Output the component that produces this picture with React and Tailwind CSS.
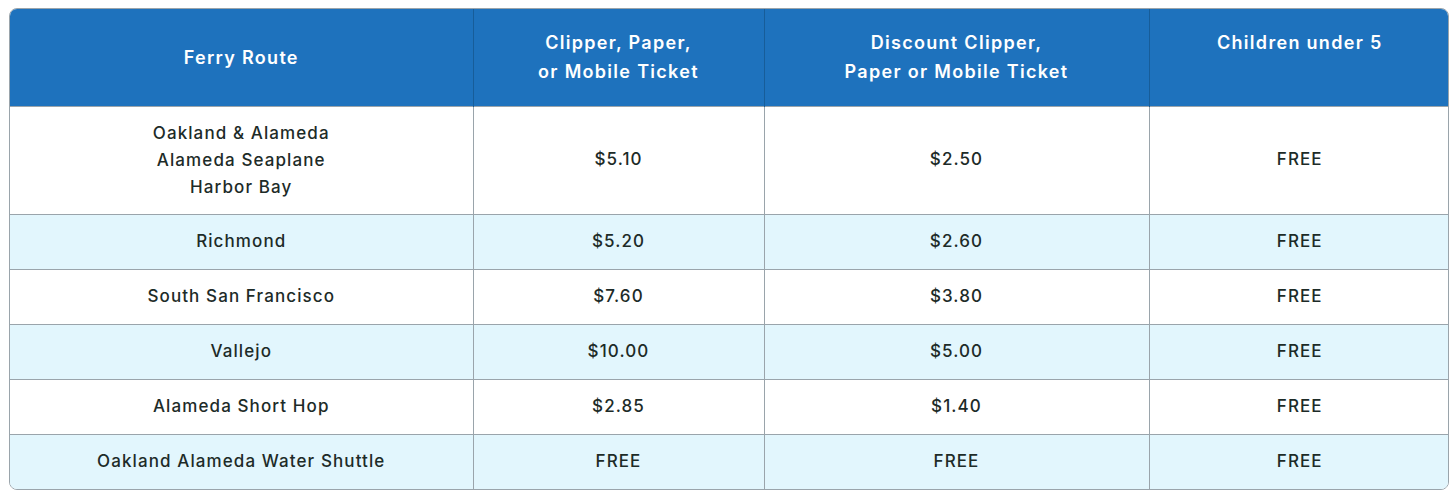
const ROWS = [
  { route: ['Oakland & Alameda', 'Alameda Seaplane', 'Harbor Bay'], adult: '$5.10', discount: '$2.50', kids: 'FREE' },
  { route: ['Richmond'], adult: '$5.20', discount: '$2.60', kids: 'FREE' },
  { route: ['South San Francisco'], adult: '$7.60', discount: '$3.80', kids: 'FREE' },
  { route: ['Vallejo'], adult: '$10.00', discount: '$5.00', kids: 'FREE' },
  { route: ['Alameda Short Hop'], adult: '$2.85', discount: '$1.40', kids: 'FREE' },
  { route: ['Oakland Alameda Water Shuttle'], adult: 'FREE', discount: 'FREE', kids: 'FREE' },
]

export default function App() {
  return (
    <div className="min-h-screen bg-white pt-2 pl-[9px]" style={{ fontFamily: "Inter, 'Noto Sans', sans-serif" }}>
      <div className="w-[1440px] overflow-hidden rounded-lg border border-[#9aa4ab]">
        <table className="w-full table-fixed border-collapse text-center">
          <colgroup>
            <col className="w-[463px]" />
            <col className="w-[291px]" />
            <col className="w-[385px]" />
            <col className="w-[301px]" />
          </colgroup>
          <thead>
            <tr className="h-[97px] bg-[#1e72bd] text-[18px] leading-[29px] tracking-[1.3px] text-white">
              <th className="align-middle font-semibold">Ferry Route</th>
              <th className="border-l border-[#175d99] align-middle font-semibold">
                Clipper, Paper,<br />or Mobile Ticket
              </th>
              <th className="border-l border-[#175d99] align-middle font-semibold">
                Discount Clipper,<br />Paper or Mobile Ticket
              </th>
              <th className="border-l border-[#175d99] pt-[19px] align-top font-semibold">Children under 5</th>
            </tr>
          </thead>
          <tbody className="text-[17px] font-medium tracking-[1.1px] text-[#1d2b28]">
            {ROWS.map((r, i) => (
              <tr
                key={i}
                className={
                  (i === 0 ? 'h-[108px] ' : 'h-[55px] ') +
                  (i % 2 === 1 ? 'bg-[#e2f6fd] ' : 'bg-white ') +
                  'border-t border-[#9aa4ab]'
                }
              >
                <td className="leading-[27px]">
                  {r.route.map((l) => (
                    <div key={l}>{l}</div>
                  ))}
                </td>
                <td className="border-l border-[#9aa4ab]">{r.adult}</td>
                <td className="border-l border-[#9aa4ab]">{r.discount}</td>
                <td className="border-l border-[#9aa4ab]">{r.kids}</td>
              </tr>
            ))}
          </tbody>
        </table>
      </div>
    </div>
  )
}
